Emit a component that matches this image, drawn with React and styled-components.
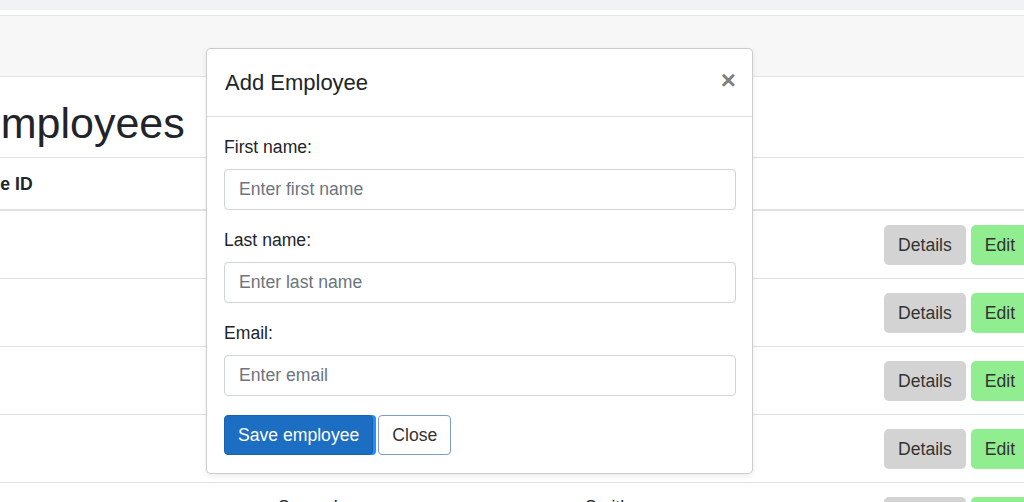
import styled, { createGlobalStyle } from "styled-components";

const GlobalStyle = createGlobalStyle`
  html, body {
    margin: 0;
    height: 502px;
    overflow: hidden;
    background: #fff;
    font-family: "Liberation Sans", Arial, sans-serif;
    color: #212529;
  }
`;

const Page = styled.div`
  width: 1024px;
  height: 502px;
  position: relative;
  overflow: hidden;
  font-size: 17.6px;
`;

const TopStrip = styled.div`
  height: 10px;
  background: #f1f2f4;
  margin-bottom: 5px;
`;

const Navbar = styled.div`
  height: 60px;
  background: #f7f7f7;
  border-top: 1px solid #e6e6e6;
  border-bottom: 1px solid #e3e3e3;
`;

const Main = styled.main`
  margin-left: -85px;
`;

const Heading = styled.h1`
  margin: 21px 0 9px 57px;
  font-size: 43px;
  line-height: 50px;
  font-weight: 400;
  color: #212529;
`;

const Table = styled.table`
  border-collapse: collapse;
  table-layout: fixed;
  width: 1200px;
`;

const HeadCell = styled.th`
  text-align: left;
  font-weight: 700;
  padding: 14px 12px 13px;
  line-height: 24px;
  border-top: 1px solid #dee2e6;
  border-bottom: 2px solid #dee2e6;
  width: ${(p) => p.$w || "auto"};
`;

const Cell = styled.td`
  padding: 12px;
  line-height: 24px;
  vertical-align: top;
  border-top: 1px solid #dee2e6;
  height: 43px;
  box-sizing: content-box;
`;

const Actions = styled.div`
  display: flex;
  gap: 5px;
  margin-top: 2px;
`;

const RowButton = styled.button`
  height: 40px;
  padding: 0 14px;
  border: none;
  border-radius: 5px;
  font-family: inherit;
  font-size: 17.6px;
  color: #333;
  background: ${(p) => (p.$edit ? "#90ee90" : "#d3d3d3")};
`;

const Modal = styled.div`
  position: absolute;
  top: 48px;
  left: 206px;
  width: 547px;
  box-sizing: border-box;
  background: #fff;
  border: 1px solid rgba(0, 0, 0, 0.2);
  border-radius: 5px;
  box-shadow: 0 2px 6px rgba(0, 0, 0, 0.08);
`;

const ModalHeader = styled.div`
  display: flex;
  justify-content: space-between;
  align-items: center;
  height: 67px;
  padding: 0 16px 0 18px;
  border-bottom: 1px solid #dee2e6;
`;

const ModalTitle = styled.h5`
  margin: 0;
  font-size: 22px;
  font-weight: 400;
  line-height: 30px;
`;

const CloseX = styled.button`
  border: none;
  background: none;
  padding: 0;
  margin-bottom: 6px;
  font-family: inherit;
  font-size: 26px;
  font-weight: 700;
  line-height: 1;
  color: #000;
  opacity: 0.5;
`;

const ModalBody = styled.div`
  padding: 17px 16px 18px 17px;
`;

const Field = styled.div`
  margin-bottom: ${(p) => (p.$last ? "19px" : "17px")};
`;

const Label = styled.label`
  display: block;
  line-height: 26px;
  margin-bottom: 9px;
`;

const Input = styled.input`
  display: block;
  width: 100%;
  box-sizing: border-box;
  height: 41px;
  padding: 0 14px;
  border: 1px solid #ced4da;
  border-radius: 4px;
  font-family: inherit;
  font-size: 17.6px;
  color: #495057;
  &::placeholder {
    color: #6c757d;
  }
`;

const Footer = styled.div`
  display: flex;
  gap: 5px;
`;

const PrimaryButton = styled.button`
  height: 40px;
  padding: 0 13px;
  border: 1px solid #1861ac;
  border-radius: 4px;
  background: #1b6ec2;
  color: #fff;
  font-family: inherit;
  font-size: 17.6px;
  box-shadow: 3px 0 0 #258cfb;
`;

const OutlineButton = styled.button`
  height: 40px;
  padding: 0 13px;
  border: 1px solid #7c9cc4;
  border-radius: 4px;
  background: #fff;
  color: #333;
  font-family: inherit;
  font-size: 17.6px;
`;

const rows = [
  { id: 1, first: "", last: "" },
  { id: 2, first: "", last: "" },
  { id: 3, first: "", last: "" },
  { id: 4, first: "", last: "" },
  { id: 5, first: "Samuel", last: "Smith" },
];

export default function App() {
  return (
    <Page>
      <GlobalStyle />
      <TopStrip />
      <Navbar />
      <Main>
        <Heading>Employees</Heading>
        <Table>
          <thead>
            <tr>
              <HeadCell $w="327px">Employee ID</HeadCell>
              <HeadCell $w="283px"></HeadCell>
              <HeadCell $w="275px"></HeadCell>
              <HeadCell></HeadCell>
            </tr>
          </thead>
          <tbody>
            {rows.map((r) => (
              <tr key={r.id}>
                <Cell>{r.id}</Cell>
                <Cell>{r.first}</Cell>
                <Cell>{r.last}</Cell>
                <Cell>
                  <Actions>
                    <RowButton>Details</RowButton>
                    <RowButton $edit>Edit</RowButton>
                  </Actions>
                </Cell>
              </tr>
            ))}
          </tbody>
        </Table>
      </Main>

      <Modal>
        <ModalHeader>
          <ModalTitle>Add Employee</ModalTitle>
          <CloseX>×</CloseX>
        </ModalHeader>
        <ModalBody>
          <Field>
            <Label>First name:</Label>
            <Input placeholder="Enter first name" />
          </Field>
          <Field>
            <Label>Last name:</Label>
            <Input placeholder="Enter last name" />
          </Field>
          <Field $last>
            <Label>Email:</Label>
            <Input placeholder="Enter email" />
          </Field>
          <Footer>
            <PrimaryButton>Save employee</PrimaryButton>
            <OutlineButton>Close</OutlineButton>
          </Footer>
        </ModalBody>
      </Modal>
    </Page>
  );
}
